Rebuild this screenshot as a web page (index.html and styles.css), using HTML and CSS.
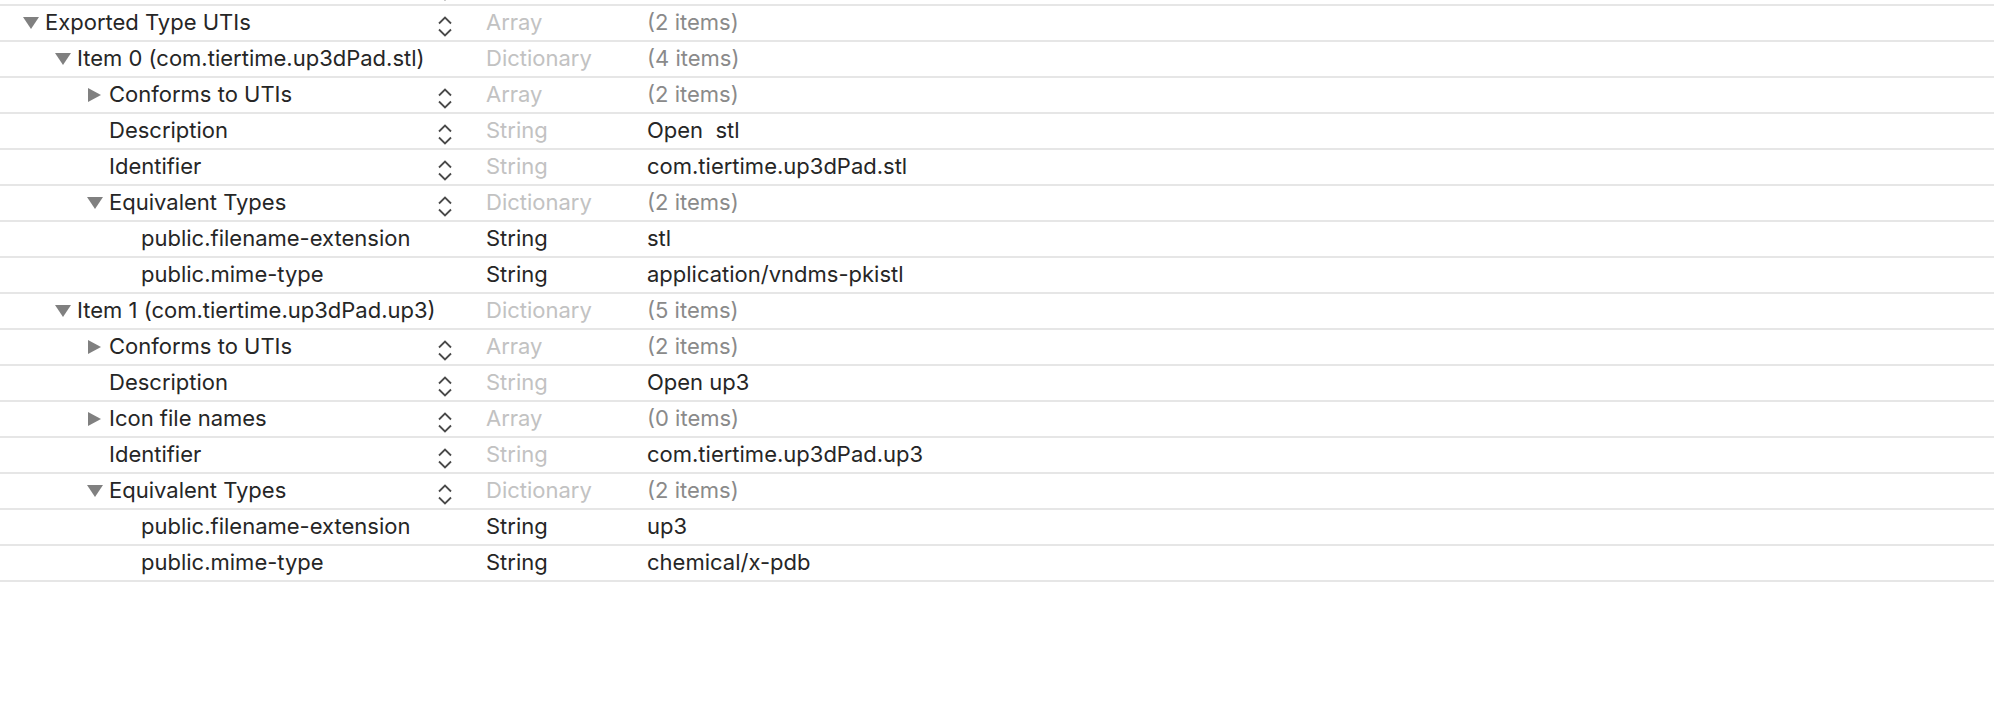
FILE: index.html
```html
<!DOCTYPE html>
<html>
<head>
<meta charset="utf-8">
<link rel="stylesheet" href="styles.css">
</head>
<body>
<div class="plist">
  <div class="row partial">
    <div class="key"></div>
    <div class="step"><svg viewBox="0 0 16 34" width="16" height="34"><path d="M2 17.5 L8 11.5 L14 17.5 M2 23.5 L8 29.5 L14 23.5"/></svg></div>
    <div class="gap"></div><div class="type"></div><div class="val"></div>
  </div>

  <div class="row l0">
    <div class="key"><span class="tri down"><svg viewBox="0 0 16 12" width="16" height="12"><polygon points="0,0 16,0 8,12"/></svg></span><span class="name">Exported Type UTIs</span></div>
    <div class="step"><svg viewBox="0 0 16 34" width="16" height="34"><path d="M2 17.5 L8 11.5 L14 17.5 M2 23.5 L8 29.5 L14 23.5"/></svg></div>
    <div class="gap"></div><div class="type dim">Array</div><div class="val sec">(2 items)</div>
  </div>

  <div class="row l1">
    <div class="key"><span class="tri down"><svg viewBox="0 0 16 12" width="16" height="12"><polygon points="0,0 16,0 8,12"/></svg></span><span class="name">Item 0 (com.tiertime.up3dPad.stl)</span></div>
    <div class="step"></div>
    <div class="gap"></div><div class="type dim">Dictionary</div><div class="val sec">(4 items)</div>
  </div>

  <div class="row l2">
    <div class="key"><span class="tri right"><svg viewBox="0 0 13 14" width="13" height="14"><polygon points="0,0 13,7 0,14"/></svg></span><span class="name">Conforms to UTIs</span></div>
    <div class="step"><svg viewBox="0 0 16 34" width="16" height="34"><path d="M2 17.5 L8 11.5 L14 17.5 M2 23.5 L8 29.5 L14 23.5"/></svg></div>
    <div class="gap"></div><div class="type dim">Array</div><div class="val sec">(2 items)</div>
  </div>

  <div class="row l2">
    <div class="key"><span class="tri"></span><span class="name">Description</span></div>
    <div class="step"><svg viewBox="0 0 16 34" width="16" height="34"><path d="M2 17.5 L8 11.5 L14 17.5 M2 23.5 L8 29.5 L14 23.5"/></svg></div>
    <div class="gap"></div><div class="type dim">String</div><div class="val">Open &nbsp;stl</div>
  </div>

  <div class="row l2">
    <div class="key"><span class="tri"></span><span class="name">Identifier</span></div>
    <div class="step"><svg viewBox="0 0 16 34" width="16" height="34"><path d="M2 17.5 L8 11.5 L14 17.5 M2 23.5 L8 29.5 L14 23.5"/></svg></div>
    <div class="gap"></div><div class="type dim">String</div><div class="val">com.tiertime.up3dPad.stl</div>
  </div>

  <div class="row l2">
    <div class="key"><span class="tri down"><svg viewBox="0 0 16 12" width="16" height="12"><polygon points="0,0 16,0 8,12"/></svg></span><span class="name">Equivalent Types</span></div>
    <div class="step"><svg viewBox="0 0 16 34" width="16" height="34"><path d="M2 17.5 L8 11.5 L14 17.5 M2 23.5 L8 29.5 L14 23.5"/></svg></div>
    <div class="gap"></div><div class="type dim">Dictionary</div><div class="val sec">(2 items)</div>
  </div>

  <div class="row l3">
    <div class="key"><span class="tri"></span><span class="name">public.filename-extension</span></div>
    <div class="step"></div>
    <div class="gap"></div><div class="type">String</div><div class="val">stl</div>
  </div>

  <div class="row l3">
    <div class="key"><span class="tri"></span><span class="name">public.mime-type</span></div>
    <div class="step"></div>
    <div class="gap"></div><div class="type">String</div><div class="val">application/vndms-pkistl</div>
  </div>

  <div class="row l1">
    <div class="key"><span class="tri down"><svg viewBox="0 0 16 12" width="16" height="12"><polygon points="0,0 16,0 8,12"/></svg></span><span class="name">Item 1 (com.tiertime.up3dPad.up3)</span></div>
    <div class="step"></div>
    <div class="gap"></div><div class="type dim">Dictionary</div><div class="val sec">(5 items)</div>
  </div>

  <div class="row l2">
    <div class="key"><span class="tri right"><svg viewBox="0 0 13 14" width="13" height="14"><polygon points="0,0 13,7 0,14"/></svg></span><span class="name">Conforms to UTIs</span></div>
    <div class="step"><svg viewBox="0 0 16 34" width="16" height="34"><path d="M2 17.5 L8 11.5 L14 17.5 M2 23.5 L8 29.5 L14 23.5"/></svg></div>
    <div class="gap"></div><div class="type dim">Array</div><div class="val sec">(2 items)</div>
  </div>

  <div class="row l2">
    <div class="key"><span class="tri"></span><span class="name">Description</span></div>
    <div class="step"><svg viewBox="0 0 16 34" width="16" height="34"><path d="M2 17.5 L8 11.5 L14 17.5 M2 23.5 L8 29.5 L14 23.5"/></svg></div>
    <div class="gap"></div><div class="type dim">String</div><div class="val">Open up3</div>
  </div>

  <div class="row l2">
    <div class="key"><span class="tri right"><svg viewBox="0 0 13 14" width="13" height="14"><polygon points="0,0 13,7 0,14"/></svg></span><span class="name">Icon file names</span></div>
    <div class="step"><svg viewBox="0 0 16 34" width="16" height="34"><path d="M2 17.5 L8 11.5 L14 17.5 M2 23.5 L8 29.5 L14 23.5"/></svg></div>
    <div class="gap"></div><div class="type dim">Array</div><div class="val sec">(0 items)</div>
  </div>

  <div class="row l2">
    <div class="key"><span class="tri"></span><span class="name">Identifier</span></div>
    <div class="step"><svg viewBox="0 0 16 34" width="16" height="34"><path d="M2 17.5 L8 11.5 L14 17.5 M2 23.5 L8 29.5 L14 23.5"/></svg></div>
    <div class="gap"></div><div class="type dim">String</div><div class="val">com.tiertime.up3dPad.up3</div>
  </div>

  <div class="row l2">
    <div class="key"><span class="tri down"><svg viewBox="0 0 16 12" width="16" height="12"><polygon points="0,0 16,0 8,12"/></svg></span><span class="name">Equivalent Types</span></div>
    <div class="step"><svg viewBox="0 0 16 34" width="16" height="34"><path d="M2 17.5 L8 11.5 L14 17.5 M2 23.5 L8 29.5 L14 23.5"/></svg></div>
    <div class="gap"></div><div class="type dim">Dictionary</div><div class="val sec">(2 items)</div>
  </div>

  <div class="row l3">
    <div class="key"><span class="tri"></span><span class="name">public.filename-extension</span></div>
    <div class="step"></div>
    <div class="gap"></div><div class="type">String</div><div class="val">up3</div>
  </div>

  <div class="row l3">
    <div class="key"><span class="tri"></span><span class="name">public.mime-type</span></div>
    <div class="step"></div>
    <div class="gap"></div><div class="type">String</div><div class="val">chemical/x-pdb</div>
  </div>
</div>
</body>
</html>
```

FILE: styles.css
```css
html, body {
  margin: 0;
  padding: 0;
  background: #ffffff;
}

body {
  font-family: Inter, "Open Sans", "Liberation Sans", sans-serif;
  font-size: 22px;
  color: #262626;
  overflow: hidden;
}

.plist {
  display: flex;
  flex-direction: column;
  margin-top: -30px;
}

.row {
  display: grid;
  grid-template-columns: 437px 16px 33px 161px 1fr;
  height: 34px;
  line-height: 32px;
  border-bottom: 2px solid #e6e6e6;
  white-space: nowrap;
}

.key {
  display: flex;
  align-items: flex-start;
  padding-left: 23px;
  overflow: hidden;
}

.l1 .key { padding-left: 55px; }
.l2 .key { padding-left: 87px; }
.l3 .key { padding-left: 119px; }

.tri {
  flex: 0 0 22px;
  width: 22px;
  height: 34px;
  display: flex;
  align-items: center;
}

.tri svg {
  display: block;
  fill: #808080;
}

.tri.right {
  flex-basis: 22px;
  padding-left: 1px;
  box-sizing: border-box;
}

.step svg {
  display: block;
  fill: none;
  stroke: #4a4a4a;
  stroke-width: 1.8;
}

.type {
  color: #262626;
}

.type.dim {
  color: #c2c2c2;
}

.val {
  color: #262626;
}

.val.sec {
  color: #8a8a8a;
}
```
